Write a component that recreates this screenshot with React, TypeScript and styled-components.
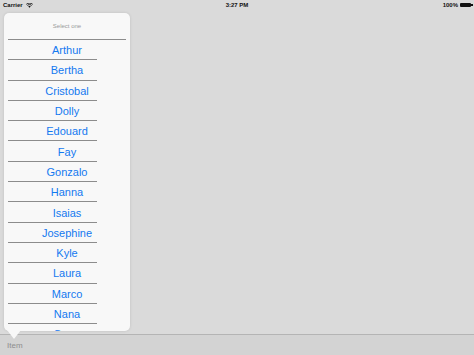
import React from "react";
import styled, { createGlobalStyle } from "styled-components";

const Global = createGlobalStyle`
  html, body { margin: 0; padding: 0; }
  body { font-family: "Liberation Sans", Arial, sans-serif; }
`;

const Screen = styled.div`
  position: relative;
  width: 474px;
  height: 355px;
  background: #dadada;
  display: flex;
  flex-direction: column;
  overflow: hidden;
`;

const StatusBar = styled.div`
  height: 10px;
  display: grid;
  grid-template-columns: 1fr auto 1fr;
  align-items: center;
  padding: 0 3px;
  font-size: 6px;
  font-weight: bold;
  color: #111;
`;

const StatusLeft = styled.div`
  display: flex;
  align-items: center;
  gap: 3px;
`;

const StatusRight = styled.div`
  display: flex;
  align-items: center;
  justify-content: flex-end;
  gap: 2px;
`;

const Battery = styled.div`
  width: 11px;
  height: 4px;
  background: #111;
  border-radius: 1px;
  position: relative;
  &::after {
    content: "";
    position: absolute;
    right: -1.5px;
    top: 1px;
    width: 1.5px;
    height: 2px;
    background: #111;
  }
`;

const Main = styled.div`
  flex: 1;
`;

const Toolbar = styled.div`
  height: 20px;
  background: #d3d3d3;
  border-top: 1px solid #b4b4b4;
  display: flex;
  align-items: center;
  padding: 0 7px;
  font-size: 8px;
  color: #8e8e8e;
`;

const Popover = styled.div`
  position: absolute;
  left: 4px;
  top: 13px;
  width: 126px;
  height: 318px;
  background: #f8f8f8;
  border-radius: 5px;
  box-shadow: 0 0 3px rgba(0, 0, 0, 0.12);
  z-index: 2;
`;

const Arrow = styled.div`
  position: absolute;
  left: 3px;
  bottom: -8px;
  width: 0;
  height: 0;
  border-left: 7px solid transparent;
  border-right: 7px solid transparent;
  border-top: 9px solid #f8f8f8;
`;

const Inner = styled.div`
  height: 100%;
  overflow: hidden;
  border-radius: 5px;
  padding: 0 4px;
  box-sizing: border-box;
`;

const Header = styled.div`
  height: 27px;
  border-bottom: 1px solid #8c8c8c;
  display: flex;
  align-items: center;
  justify-content: center;
  font-size: 6px;
  color: #9a9a9a;
  box-sizing: border-box;
  padding-bottom: 1px;
`;

const Row = styled.div`
  position: relative;
  height: 20.3px;
  display: flex;
  align-items: center;
  justify-content: center;
  font-size: 11px;
  color: #1479f0;
  box-sizing: border-box;
  &::after {
    content: "";
    position: absolute;
    left: 0;
    bottom: 0;
    width: 89px;
    height: 1px;
    background: #8c8c8c;
  }
`;

const names = [
  "Arthur",
  "Bertha",
  "Cristobal",
  "Dolly",
  "Edouard",
  "Fay",
  "Gonzalo",
  "Hanna",
  "Isaias",
  "Josephine",
  "Kyle",
  "Laura",
  "Marco",
  "Nana",
  "Omar",
];

const Wifi = () => (
  <svg width="7" height="5" viewBox="0 0 14 10">
    <path d="M7 9.5 L4.6 6.8 A3.4 3.4 0 0 1 9.4 6.8 Z" fill="#111" />
    <path d="M2.6 4.8 A6.3 6.3 0 0 1 11.4 4.8" stroke="#111" strokeWidth="1.8" fill="none" />
    <path d="M0.6 2.6 A9.2 9.2 0 0 1 13.4 2.6" stroke="#111" strokeWidth="1.8" fill="none" />
  </svg>
);

export default function App() {
  return (
    <Screen>
      <Global />
      <StatusBar>
        <StatusLeft>
          <span>Carrier</span>
          <Wifi />
        </StatusLeft>
        <span>3:27 PM</span>
        <StatusRight>
          <span>100%</span>
          <Battery />
        </StatusRight>
      </StatusBar>
      <Main />
      <Toolbar>Item</Toolbar>
      <Popover>
        <Inner>
          <Header>Select one</Header>
          {names.map((n) => (
            <Row key={n}>{n}</Row>
          ))}
        </Inner>
        <Arrow />
      </Popover>
    </Screen>
  );
}
